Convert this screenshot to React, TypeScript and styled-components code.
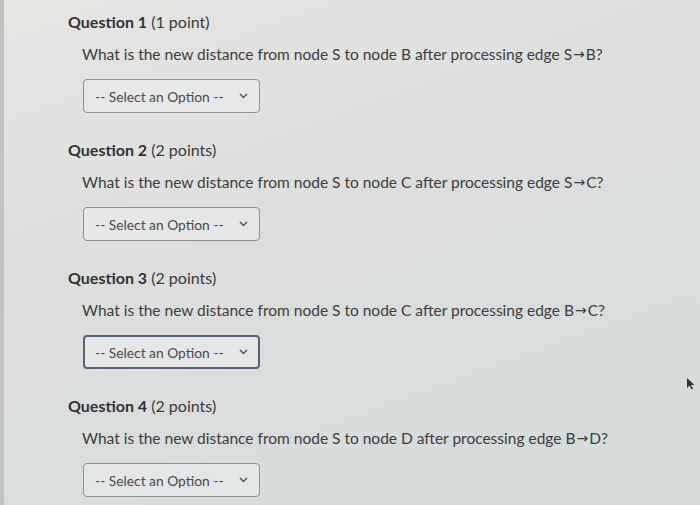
import React from "react";
import styled, { createGlobalStyle } from "styled-components";

const Global = createGlobalStyle`
  html, body { margin: 0; padding: 0; }
  body {
    width: 700px;
    height: 505px;
    overflow: hidden;
    font-family: Lato, "Open Sans", "Liberation Sans", sans-serif;
    background: linear-gradient(160deg, #e6e6e3 0%, #dddfde 40%, #d8dcdc 75%, #d4d9da 100%);
  }
`;

const Page = styled.div`
  position: relative;
  height: 505px;
  padding: 10px 0 0 64px;
  box-sizing: border-box;
  border-left: 4px solid #c2c4c3;
`;

const Block = styled.section`
  display: flex;
  flex-direction: column;
  align-items: flex-start;
  height: 128px;
`;

const Title = styled.div`
  font-size: 16px;
  line-height: 24px;
  color: #3a3a3a;
  b { font-weight: 700; color: #333; }
`;

const Prompt = styled.div`
  margin: 9px 0 0 14px;
  height: 22px;
  font-size: 15.5px;
  line-height: 22px;
  color: #3d3d3d;
  white-space: nowrap;
`;

const Arrow = styled.span`
  display: inline-block;
  font-family: "DejaVu Sans", sans-serif;
  font-size: 14px;
  line-height: 0;
  margin: 0 1px;
  vertical-align: 1px;
`;

const Select = styled.div<{ $focus?: boolean }>`
  margin: 14px 0 0 15px;
  width: 177px;
  height: 34px;
  box-sizing: border-box;
  display: flex;
  align-items: center;
  padding: 0 0 0 ${(p) => (p.$focus ? 10 : 11)}px;
  border: ${(p) => (p.$focus ? "2px solid #55627a" : "1px solid #8e9192")};
  border-radius: 4px;
  background: rgba(235, 236, 236, 0.6);
  font-size: 13.8px;
  color: #4a4a4a;
`;

const SelectText = styled.span`
  flex: 0 0 auto;
`;

const Chevron = styled.svg`
  margin-left: 15px;
  width: 9px;
  height: 6px;
`;

const Cursor = styled.svg`
  position: absolute;
  left: 682px;
  top: 377px;
  width: 9px;
  height: 13px;
`;

const questions = [
  { n: 1, pts: "1 point", to: "B", edge: ["S", "B"] },
  { n: 2, pts: "2 points", to: "C", edge: ["S", "C"] },
  { n: 3, pts: "2 points", to: "C", edge: ["B", "C"], focus: true },
  { n: 4, pts: "2 points", to: "D", edge: ["B", "D"] },
];

export default function App() {
  return (
    <>
      <Global />
      <Page>
        {questions.map((q) => (
          <Block key={q.n}>
            <Title>
              <b>Question {q.n}</b> ({q.pts})
            </Title>
            <Prompt>
              What is the new distance from node S to node {q.to} after processing edge {q.edge[0]}
              <Arrow>→</Arrow>
              {q.edge[1]}?
            </Prompt>
            <Select $focus={q.focus}>
              <SelectText>-- Select an Option --</SelectText>
              <Chevron viewBox="0 0 9 6">
                <path d="M1 1 L4.5 4.5 L8 1" fill="none" stroke="#555" strokeWidth="1.5" />
              </Chevron>
            </Select>
          </Block>
        ))}
        <Cursor viewBox="0 0 9 13">
          <path d="M1 1 L1 11 L3.5 8.5 L5.5 12.5 L7 11.8 L5 8 L8.5 8 Z" fill="#333" />
        </Cursor>
      </Page>
    </>
  );
}
